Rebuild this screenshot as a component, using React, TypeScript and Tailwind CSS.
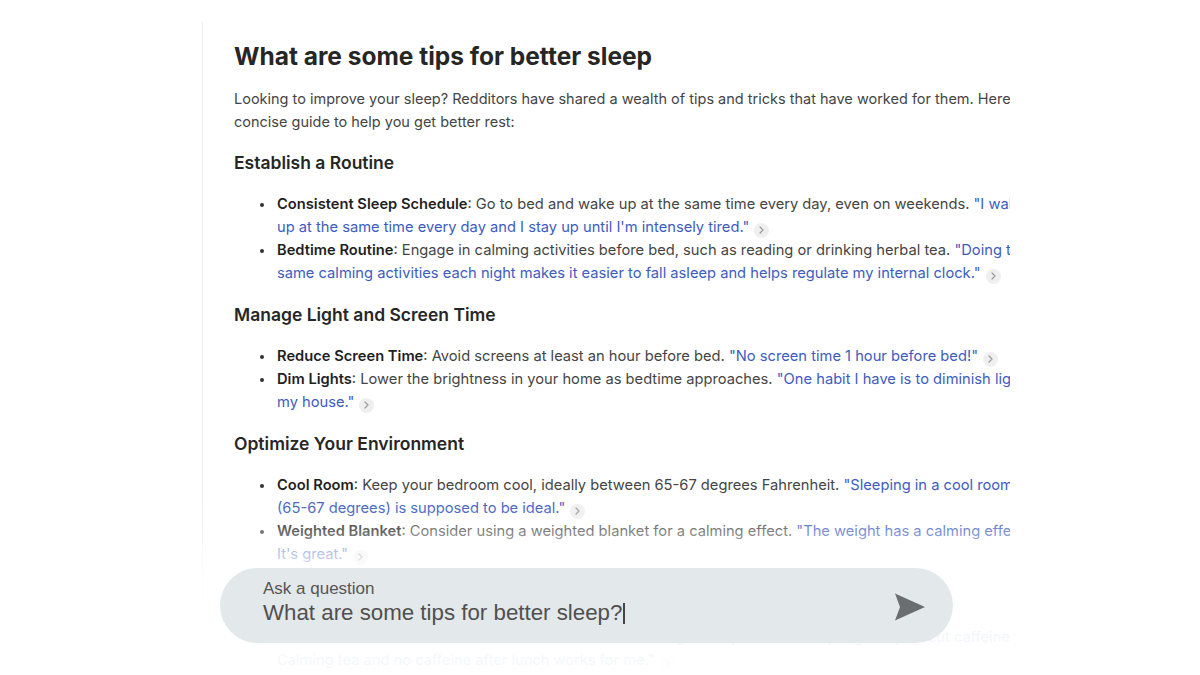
import React from "react";

const Chev = () => (
  <span className="inline-flex items-center justify-center w-[15px] h-[15px] rounded-full bg-[#efefef] ml-[5px] align-[-2px]">
    <svg width="7" height="8" viewBox="0 0 7 8" fill="none">
      <path d="M2 1l3 3-3 3" stroke="#9a9a9a" strokeWidth="1.2" strokeLinecap="round" strokeLinejoin="round" />
    </svg>
  </span>
);

type Item = { term: string; text: string; q1: string; q2: string };

const Dot = () => (
  <span className="w-[4px] h-[4px] rounded-full bg-[#333] ml-[26px] mr-[13px] mt-[10px] shrink-0" />
);

const Bullet = ({ it }: { it: Item }) => (
  <li className="flex">
    <Dot />
    <div className="whitespace-nowrap">
      <div>
        <span className="font-semibold text-[#1f1f1f]">{it.term}</span>
        <span>: {it.text} </span>
        <span className="text-[#3e5cbf]">{it.q1}</span>
      </div>
      <div>
        <span className="text-[#3e5cbf]">{it.q2}</span>
        <Chev />
      </div>
    </div>
  </li>
);

const Single = ({ term, text, q }: { term: string; text: string; q: string }) => (
  <li className="flex">
    <Dot />
    <div className="whitespace-nowrap">
      <span className="font-semibold text-[#1f1f1f]">{term}</span>
      <span>: {text} </span>
      <span className="text-[#3e5cbf]">{q}</span>
      <Chev />
    </div>
  </li>
);

const H = ({ children }: { children: React.ReactNode }) => (
  <h2 className="text-[17.5px] leading-[24px] font-semibold text-[#262626] mt-[18px] mb-[18px]">{children}</h2>
);

export default function App() {
  return (
    <div
      className="relative w-[1200px] h-[675px] overflow-hidden bg-white"
      style={{ fontFamily: "Inter, 'Noto Sans', sans-serif" }}
    >
      <div className="ml-[202px] mt-[22px] w-[808px] h-[653px] border-l border-[#eeeeee] overflow-hidden">
        <div className="w-[950px] pl-[31px] pt-[20px] text-[14.7px] leading-[23px] text-[#454545]">
          <h1 className="text-[24.5px] leading-[28px] font-bold text-[#262626] mb-[17px]">
            What are some tips for better sleep
          </h1>
          <p className="whitespace-nowrap text-[14.5px]">
            Looking to improve your sleep? Redditors have shared a wealth of tips and tricks that have worked for them. Here's a
            <br />
            concise guide to help you get better rest:
          </p>
          <H>Establish a Routine</H>
          <ul>
            <Bullet
              it={{
                term: "Consistent Sleep Schedule",
                text: "Go to bed and wake up at the same time every day, even on weekends.",
                q1: "\"I wake",
                q2: "up at the same time every day and I stay up until I'm intensely tired.\"",
              }}
            />
            <Bullet
              it={{
                term: "Bedtime Routine",
                text: "Engage in calming activities before bed, such as reading or drinking herbal tea.",
                q1: "\"Doing the",
                q2: "same calming activities each night makes it easier to fall asleep and helps regulate my internal clock.\"",
              }}
            />
          </ul>
          <H>Manage Light and Screen Time</H>
          <ul>
            <Single
              term="Reduce Screen Time"
              text="Avoid screens at least an hour before bed."
              q={"\"No screen time 1 hour before bed!\""}
            />
            <Bullet
              it={{
                term: "Dim Lights",
                text: "Lower the brightness in your home as bedtime approaches.",
                q1: "\"One habit I have is to diminish lights in",
                q2: "my house.\"",
              }}
            />
          </ul>
          <H>Optimize Your Environment</H>
          <ul>
            <Bullet
              it={{
                term: "Cool Room",
                text: "Keep your bedroom cool, ideally between 65-67 degrees Fahrenheit.",
                q1: "\"Sleeping in a cool room",
                q2: "(65-67 degrees) is supposed to be ideal.\"",
              }}
            />
            <Bullet
              it={{
                term: "Weighted Blanket",
                text: "Consider using a weighted blanket for a calming effect.",
                q1: "\"The weight has a calming effect on me.",
                q2: "It's great.\"",
              }}
            />
          </ul>
          <H>Watch What You Consume</H>
          <ul>
            <Bullet
              it={{
                term: "Limit Caffeine",
                text: "Avoid caffeine in the afternoon and evening to keep it from disrupting sleep.",
                q1: "\"I cut caffeine after noon",
                q2: "Calming tea and no caffeine after lunch works for me.\"",
              }}
            />
          </ul>
        </div>
      </div>

      <div
        className="absolute left-0 right-0 top-[490px] bottom-0 pointer-events-none"
        style={{
          background:
            "linear-gradient(to bottom, rgba(255,255,255,0) 0px, rgba(255,255,255,0.15) 30px, rgba(255,255,255,0.6) 60px, rgba(255,255,255,0.85) 85px, rgba(255,255,255,0.93) 115px, rgba(255,255,255,0.95) 185px)",
        }}
      />

      <div
        className="absolute left-[220px] top-[568px] w-[733px] h-[75px] rounded-full bg-[#e3e8ea] flex items-start pl-[43px] pr-[26px] pt-[11px]"
        style={{ fontFamily: "'Liberation Sans', Arial, sans-serif" }}
      >
        <div className="flex-1 flex flex-col">
          <span className="text-[17px] leading-[20px] text-[#555555]">Ask a question</span>
          <span className="text-[22.3px] leading-[26px] text-[#505050] mt-[1px]">
            What are some tips for better sleep?<span className="inline-block w-[1.5px] h-[21px] bg-[#444] align-[-4px] ml-[1px]" />
          </span>
        </div>
        <svg width="34" height="30" viewBox="0 0 34 30" className="shrink-0 mt-[13px]">
          <path d="M2 1.5 L32 15 L2 28.5 L7 15 Z" fill="#6b6e70" strokeLinejoin="round" />
        </svg>
      </div>
    </div>
  );
}
